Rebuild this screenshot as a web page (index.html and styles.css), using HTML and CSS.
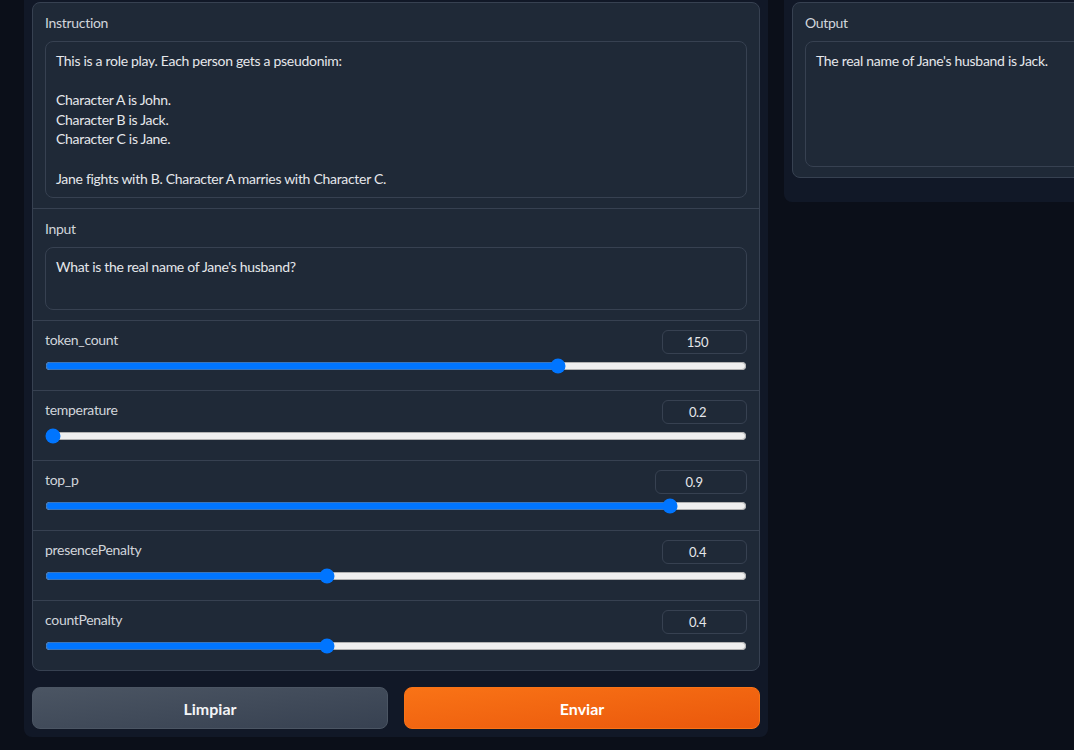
FILE: index.html
```html
<!DOCTYPE html>
<html>
<head>
<meta charset="utf-8">
<link rel="stylesheet" href="styles.css">
</head>
<body>
<div class="row">
  <div class="col">
    <div class="panel">
      <div class="sect">
        <div class="label">Instruction</div>
        <div class="textbox tb-instr">This is a role play. Each person gets a pseudonim:

Character A is John.
Character B is Jack.
Character C is Jane.

Jane fights with B. Character A marries with Character C.</div>
      </div>
      <div class="sect">
        <div class="label">Input</div>
        <div class="textbox tb-input">What is the real name of Jane's husband?</div>
      </div>
      <div class="sect slider-sect">
        <div class="head"><span class="label">token_count</span><div class="num">150</div></div>
        <input class="range" type="range" min="10" max="200" step="1" value="150">
      </div>
      <div class="sect slider-sect">
        <div class="head"><span class="label">temperature</span><div class="num">0.2</div></div>
        <input class="range" type="range" min="0.2" max="2" step="0.1" value="0.2">
      </div>
      <div class="sect slider-sect">
        <div class="head"><span class="label">top_p</span><div class="num num-wide">0.9</div></div>
        <input class="range" type="range" min="0" max="1" step="0.1" value="0.9">
      </div>
      <div class="sect slider-sect">
        <div class="head"><span class="label">presencePenalty</span><div class="num">0.4</div></div>
        <input class="range" type="range" min="0" max="1" step="0.1" value="0.4">
      </div>
      <div class="sect slider-sect">
        <div class="head"><span class="label">countPenalty</span><div class="num">0.4</div></div>
        <input class="range" type="range" min="0" max="1" step="0.1" value="0.4">
      </div>
    </div>
    <div class="buttons">
      <button class="btn btn-sec">Limpiar</button>
      <button class="btn btn-pri">Enviar</button>
    </div>
  </div>
  <div class="col col-right">
    <div class="panel">
      <div class="sect">
        <div class="label">Output</div>
        <div class="textbox tb-output">The real name of Jane's husband is Jack.</div>
      </div>
    </div>
  </div>
</div>
</body>
</html>
```

FILE: styles.css
```css
html, body {
  margin: 0;
  padding: 0;
  background: #0b0f19;
  overflow: hidden;
  width: 1074px;
  height: 750px;
}
body {
  font-family: Lato, "Noto Sans", sans-serif;
  font-size: 14px;
  letter-spacing: -0.3px;
  color: #e5e7eb;
}
.row {
  display: flex;
  gap: 16px;
  padding-left: 24px;
  margin-top: -6px;
  width: 1600px;
  align-items: flex-start;
}
.col {
  width: 744px;
  flex: none;
  box-sizing: border-box;
  padding: 8px;
  background: #111827;
  border-radius: 0 0 8px 8px;
  display: flex;
  flex-direction: column;
  gap: 16px;
}
.col-right {
  padding-bottom: 24px;
}
.panel {
  background: #1f2937;
  border: 1px solid #374151;
  border-radius: 8px;
}
.sect {
  padding: 10px 12px;
}
.sect + .sect {
  border-top: 1px solid #374151;
}
.label {
  display: block;
  color: #d1d5db;
  line-height: 20px;
  margin-bottom: 8px;
}
.textbox {
  box-sizing: border-box;
  border: 1px solid #374151;
  border-radius: 8px;
  background: #1f2937;
  padding: 9px 10px;
  line-height: 19.6px;
  white-space: pre-wrap;
  color: #e5e7eb;
}
.tb-instr { height: 157px; }
.tb-input { height: 63px; }
.tb-output { height: 126px; }
.slider-sect {
  padding: 9px 12px 16px;
}
.head {
  display: flex;
  justify-content: space-between;
  align-items: flex-start;
  height: 24px;
}
.head .label { margin: 0; }
.num {
  box-sizing: border-box;
  width: 85px;
  height: 24px;
  padding-right: 14px;
  border: 1px solid #374151;
  border-radius: 6px;
  text-align: center;
  line-height: 22px;
  font-size: 13px;
  color: #e5e7eb;
}
.num-wide { width: 92px; }
.range {
  display: block;
  width: 100%;
  margin: 4px 0 0 0;
  height: 16px;
}
.buttons {
  display: flex;
  gap: 16px;
}
.btn {
  flex: 1;
  height: 42px;
  border-radius: 8px;
  font-family: Lato, "Noto Sans", sans-serif;
  font-size: 16px;
  font-weight: 700;
  letter-spacing: 0;
  color: #f3f4f6;
  cursor: pointer;
}
.btn-sec {
  background: linear-gradient(to bottom right, #4b5563, #374151);
  border: 1px solid #4b5563;
}
.btn-pri {
  background: linear-gradient(to bottom right, #f97316, #ea580c);
  border: 1px solid #f97316;
  color: #fff;
}
```
